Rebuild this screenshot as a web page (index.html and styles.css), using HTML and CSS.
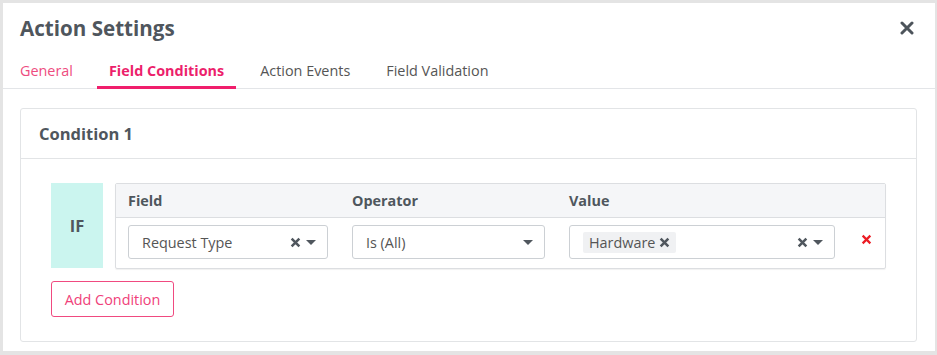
FILE: index.html
```html
<!DOCTYPE html>
<html lang="en">
<head>
    <meta charset="UTF-8">
    <title>Action Settings</title>
    <link rel="stylesheet" href="styles.css">
</head>
<body>
    <div class="modal">
        <div class="modal-header">
            <h1>Action Settings</h1>
            <span class="close">
                <svg width="14" height="14" viewBox="0 0 14 14"><path d="M2 2L12 12M12 2L2 12" stroke="#4d545b" stroke-width="3" stroke-linecap="round"/></svg>
            </span>
        </div>

        <div class="tabs">
            <span class="tab tab-link">General</span>
            <span class="tab active">Field Conditions</span>
            <span class="tab">Action Events</span>
            <span class="tab">Field Validation</span>
        </div>

        <div class="modal-body">
            <div class="card">
                <div class="card-header">Condition 1</div>
                <div class="card-body">
                    <div class="rule">
                        <div class="if-box">IF</div>
                        <div class="rule-table">
                            <div class="th">Field</div>
                            <div class="th">Operator</div>
                            <div class="th">Value</div>
                            <div class="th"></div>

                            <div class="td">
                                <div class="select">
                                    <span class="select-text">Request Type</span>
                                    <span class="clear">
                                        <svg width="11" height="11" viewBox="0 0 10 10"><path d="M1.5 1.5L8.5 8.5M8.5 1.5L1.5 8.5" stroke="#50575e" stroke-width="2.3"/></svg>
                                    </span>
                                    <span class="caret"></span>
                                </div>
                            </div>
                            <div class="td">
                                <div class="select">
                                    <span class="select-text">Is (All)</span>
                                    <span class="caret"></span>
                                </div>
                            </div>
                            <div class="td">
                                <div class="select">
                                    <span class="select-text">
                                        <span class="tag">Hardware
                                            <svg width="11" height="11" viewBox="0 0 10 10"><path d="M1.5 1.5L8.5 8.5M8.5 1.5L1.5 8.5" stroke="#50575e" stroke-width="2.3"/></svg>
                                        </span>
                                    </span>
                                    <span class="clear">
                                        <svg width="11" height="11" viewBox="0 0 10 10"><path d="M1.5 1.5L8.5 8.5M8.5 1.5L1.5 8.5" stroke="#50575e" stroke-width="2.3"/></svg>
                                    </span>
                                    <span class="caret"></span>
                                </div>
                            </div>
                            <div class="td remove">
                                <svg width="11" height="11" viewBox="0 0 10 10"><path d="M1.5 1.5L8.5 8.5M8.5 1.5L1.5 8.5" stroke="#ec1c24" stroke-width="2"/></svg>
                            </div>
                        </div>
                    </div>
                    <button type="button" class="btn-add">Add Condition</button>
                </div>
            </div>
        </div>
    </div>
</body>
</html>
```

FILE: styles.css
```css
* {
    margin: 0;
    padding: 0;
    box-sizing: border-box;
}

body {
    font-family: "Open Sans", "Noto Sans", sans-serif;
    background-color: #e4e4e4;
    color: #555;
    padding: 3px 2px 4px 3px;
}

.modal {
    background: #fff;
    height: 348px;
}

.modal-header {
    display: flex;
    justify-content: space-between;
    align-items: center;
    padding: 4px 21px 0 17px;
    height: 46px;
}

.modal-header h1 {
    font-size: 20.6px;
    font-weight: 700;
    color: #4f565d;
}

.close {
    display: flex;
}

.tabs {
    display: flex;
    gap: 12px;
    padding-left: 5px;
    border-bottom: 1px solid #e3e5e8;
    height: 40px;
}

.tab {
    padding: 6px 12px 0;
    font-size: 14.4px;
    color: #555;
    line-height: 31px;
    border-bottom: 3px solid transparent;
    margin-bottom: -1px;
}

.tab-link {
    color: #ee4c80;
}

.tab.active {
    color: #ec1f6c;
    font-weight: 700;
    border-bottom-color: #f01e6c;
}

.modal-body {
    padding: 19px 18px 10px 17px;
}

.card {
    border: 1px solid #e2e4e6;
    border-radius: 3px;
}

.card-header {
    height: 50px;
    padding-left: 18px;
    font-size: 16.5px;
    font-weight: 700;
    color: #4f565d;
    line-height: 49px;
    border-bottom: 1px solid #e2e4e6;
}

.card-body {
    padding: 24px 30px 24px 30px;
}

.rule {
    display: flex;
    gap: 12px;
}

.if-box {
    width: 52px;
    height: 85px;
    background: #cbf5ef;
    display: flex;
    align-items: center;
    justify-content: center;
    font-weight: 700;
    font-size: 16.5px;
    color: #4f565d;
}

.rule-table {
    flex: 1;
    display: grid;
    grid-template-columns: 224px 217px 290px 1fr;
    grid-template-rows: 34px 50px;
    border: 1px solid #dcdee1;
    border-radius: 2px;
    box-shadow: 0 1px 1px rgba(0, 0, 0, 0.06);
}

.th {
    background: #f5f6f8;
    border-bottom: 1px solid #dcdee1;
    font-size: 14.4px;
    font-weight: 700;
    color: #4f565d;
    padding: 0 12px;
    line-height: 33px;
}

.td {
    padding: 7px 12px 0;
}

.select {
    display: flex;
    align-items: center;
    height: 34px;
    border: 1px solid #ccd0d4;
    border-radius: 3px;
    padding: 0 11px 0 13px;
    font-size: 14.4px;
    color: #555;
}

.select-text {
    flex: 1;
}

.clear {
    display: flex;
    margin-right: 5px;
}

.caret {
    width: 0;
    height: 0;
    border-left: 5px solid transparent;
    border-right: 5px solid transparent;
    border-top: 5px solid #50575e;
}

.tag {
    display: inline-flex;
    align-items: center;
    gap: 4px;
    background: #f0f1f3;
    border-radius: 2px;
    padding: 0 6px;
    height: 21px;
    line-height: 21px;
}

.remove {
    display: flex;
    justify-content: center;
    padding: 16px 0 0 0;
}

.btn-add {
    margin-top: 12px;
    height: 36px;
    width: 123px;
    border: 1px solid #f04a80;
    border-radius: 3px;
    background: #fff;
    color: #f0417a;
    font-family: "Open Sans", "Noto Sans", sans-serif;
    font-size: 14.4px;
}
```
